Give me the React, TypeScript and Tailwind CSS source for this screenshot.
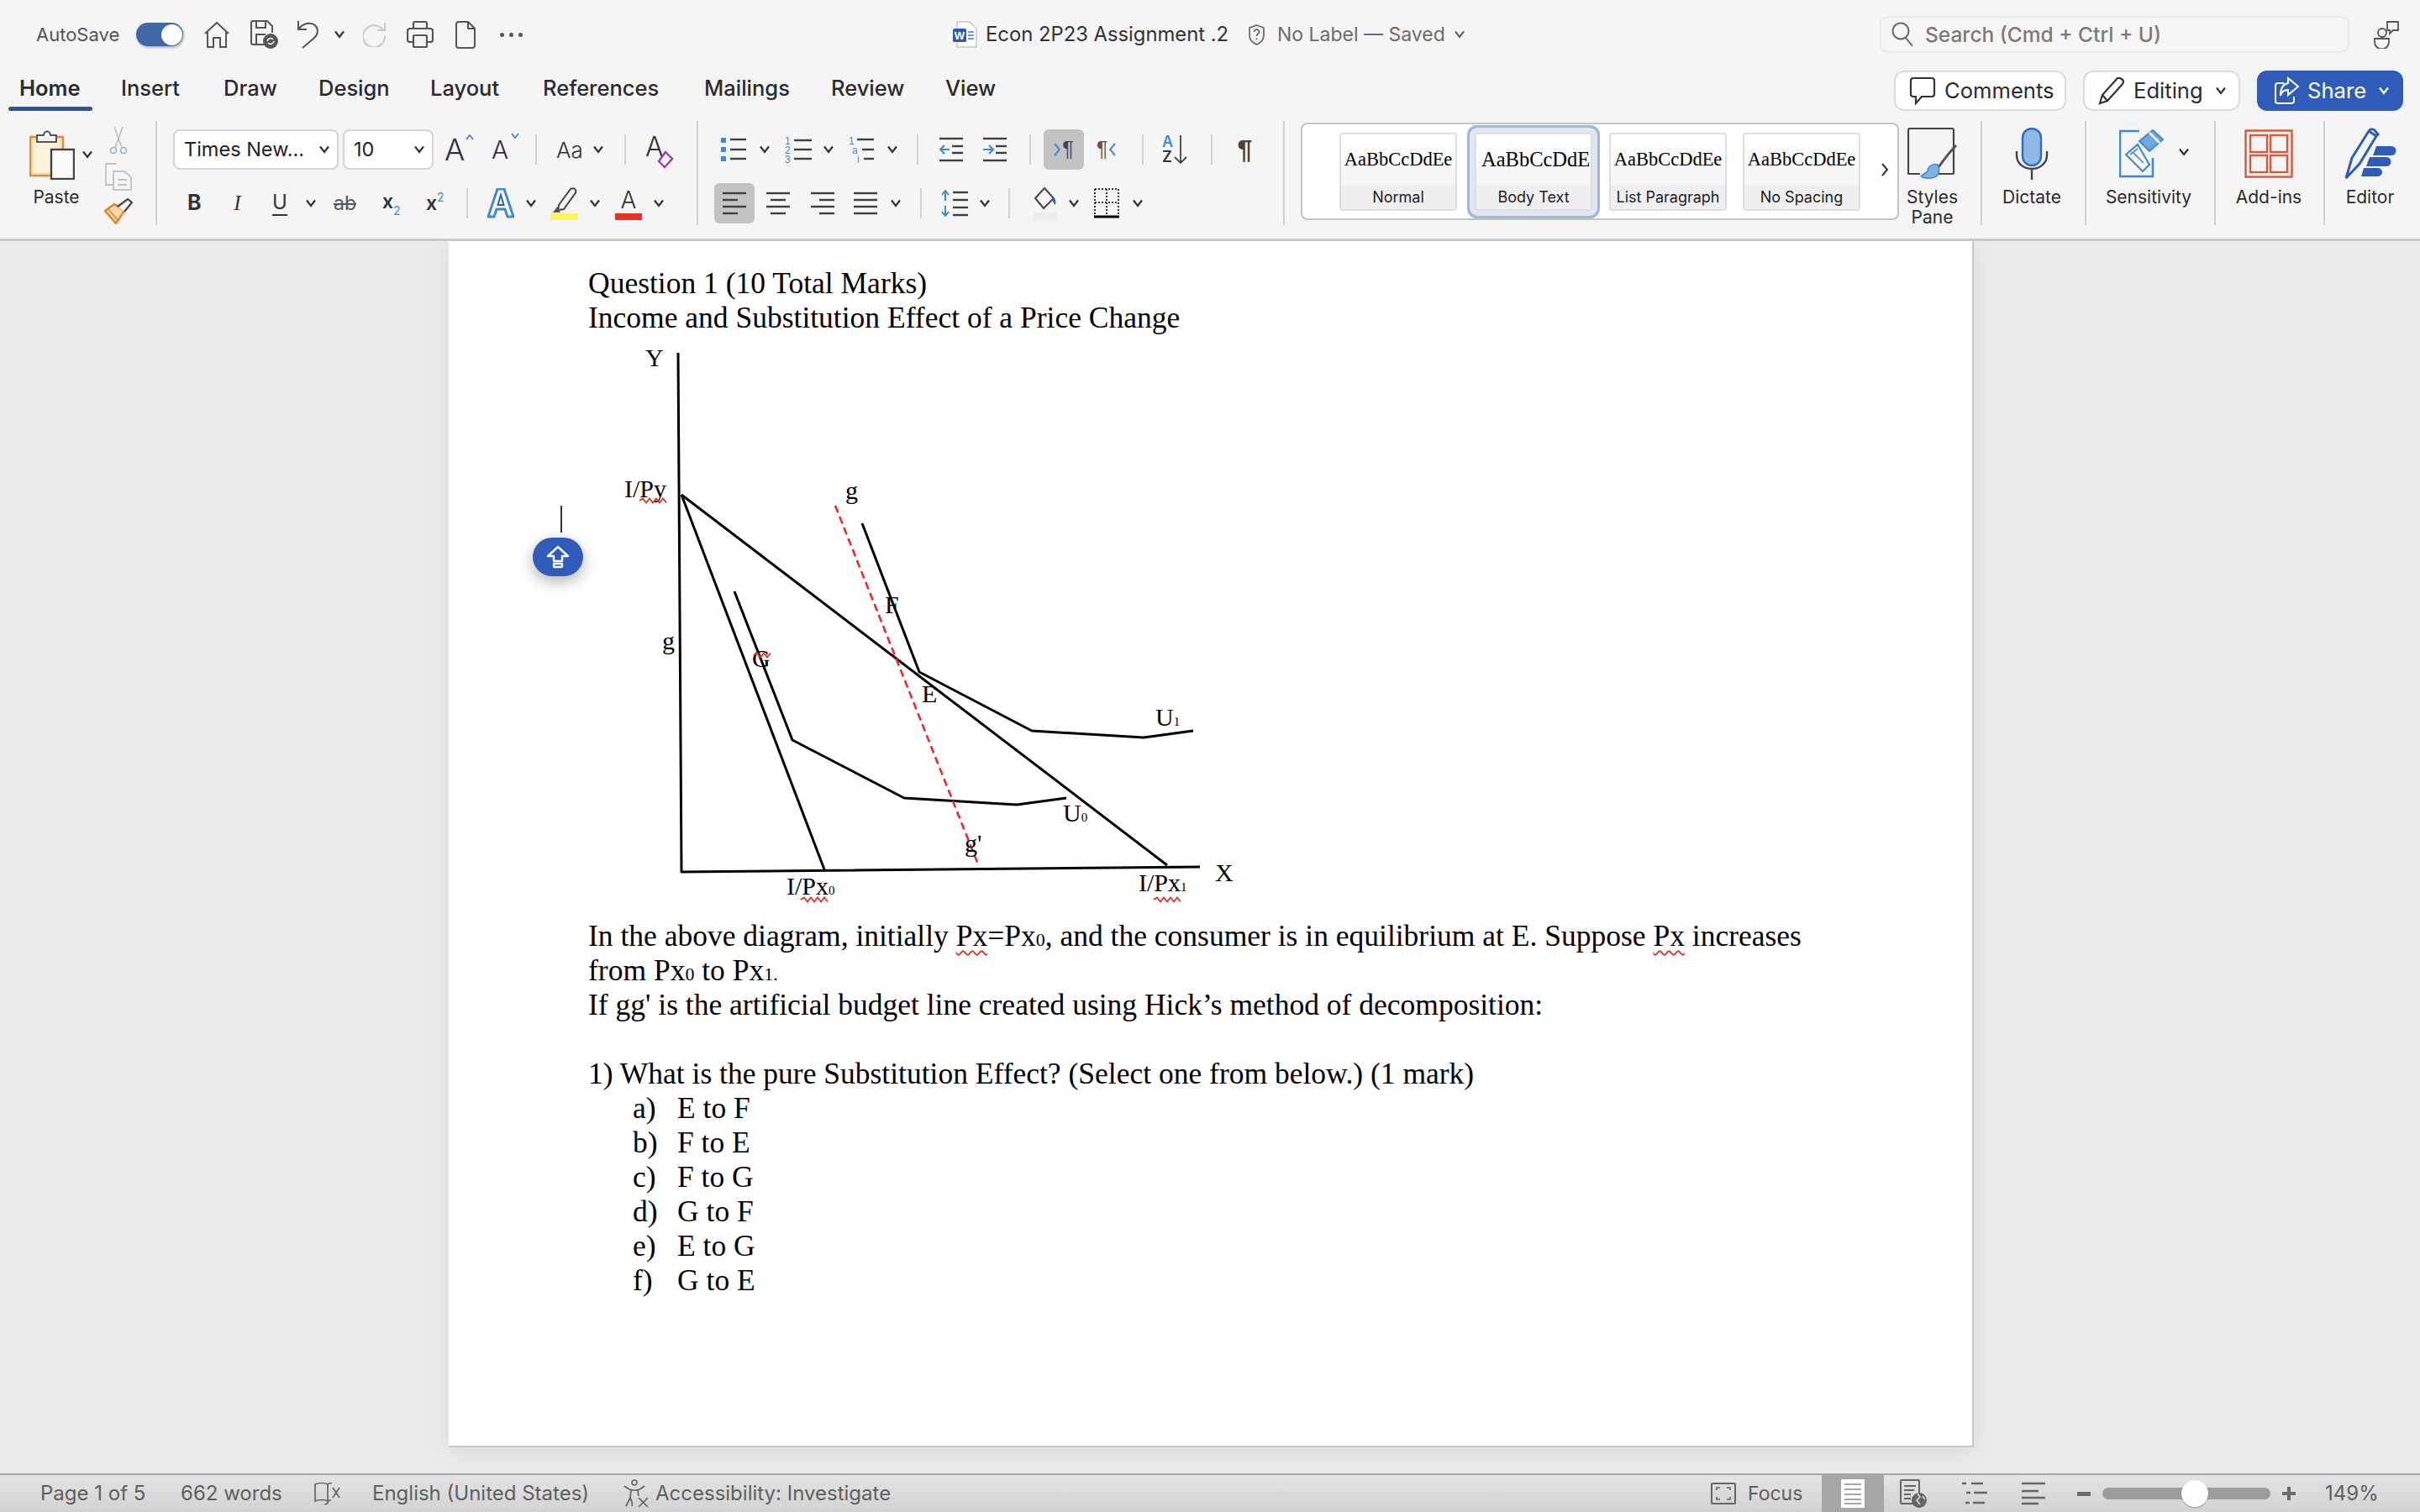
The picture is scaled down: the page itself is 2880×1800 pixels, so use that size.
import type { ReactNode } from 'react'

const INK = '#3f3f3f'
const SKY = '#3f8ad2'

function Chev({ className = '', color = '#333' }: { className?: string; color?: string }) {
  return (
    <svg width="14" height="10" viewBox="0 0 14 10" fill="none" className={`shrink-0 ${className}`}>
      <path d="M2 1.5 7 8 12 1.5" stroke={color} strokeWidth="2.2" />
    </svg>
  )
}

function Sep({ className = '' }: { className?: string }) {
  return <div className={`w-[2px] h-[36px] bg-[#d2d2d2] shrink-0 ${className}`} />
}

function GroupSep() {
  return <div className="w-[2px] h-[124px] mt-[6px] bg-[#cfcfcf] shrink-0" />
}

function Lines({ w, ys, x = 0, color = INK, sw = 2.4 }: { w: number; ys: number[]; x?: number; color?: string; sw?: number }) {
  return (
    <>
      {ys.map((y) => (
        <path key={y} d={`M${x} ${y}H${w}`} stroke={color} strokeWidth={sw} />
      ))}
    </>
  )
}

function AlignIcon({ kind, className = '' }: { kind: 'left' | 'center' | 'right' | 'just'; className?: string }) {
  const rows: Record<string, [number, number][]> = {
    left: [[0, 28], [0, 18], [0, 28], [0, 18]],
    center: [[0, 28], [5, 23], [0, 28], [5, 23]],
    right: [[0, 28], [10, 28], [0, 28], [10, 28]],
    just: [[0, 28], [0, 28], [0, 28], [0, 28]],
  }
  return (
    <svg width="28" height="28" viewBox="0 0 28 28" fill="none" className={`shrink-0 ${className}`}>
      {rows[kind].map(([a, b], i) => (
        <path key={i} d={`M${a} ${2 + i * 8}H${b}`} stroke={INK} strokeWidth="2.4" />
      ))}
    </svg>
  )
}

function Squiggle({ x, y, w }: { x: number; y: number; w: number }) {
  let d = `M${x} ${y}`
  for (let i = 4, up = true; i <= w; i += 4, up = !up) d += `L${x + i} ${y + (up ? -2.5 : 2.5)}`
  return <path d={d} stroke="#d8342a" strokeWidth="1.8" fill="none" />
}

function Spell({ children }: { children: ReactNode }) {
  return <span className="underline decoration-wavy decoration-[#d8342a] decoration-[1.5px] underline-offset-[5px]">{children}</span>
}

function Small({ children }: { children: ReactNode }) {
  return <span className="text-[22px] leading-none">{children}</span>
}

function Tab({ label, active, className = '' }: { label: string; active?: boolean; className?: string }) {
  return (
    <div className={`relative shrink-0 text-[25.5px] leading-[40px] text-[#2b2b2b] whitespace-nowrap ${active ? 'font-semibold' : 'font-[450]'} ${className}`}>
      {label}
      {active && <div className="absolute left-[-13px] w-[100px] top-[42px] h-[5px] rounded-full bg-[#2f5496]" />}
    </div>
  )
}

function StyleCard({ name, selected, big }: { name: string; selected?: boolean; big?: boolean }) {
  return (
    <div className={`w-[140px] h-[93px] shrink-0 rounded-[4px] border-2 border-[#dedede] flex flex-col bg-white ${selected ? 'shadow-[0_0_0_6px_#e0e7f3,0_0_0_9px_#a3b8d9]' : ''}`}>
      <div className={`h-[60px] flex items-center font-['Liberation_Serif',serif] text-black whitespace-nowrap overflow-hidden bg-gradient-to-b from-white to-[#f5f5f5] ${big ? 'text-[24.5px] pl-[6px]' : 'text-[22.5px] justify-center'}`}>
        AaBbCcDdEe
      </div>
      <div className="flex-1 flex items-center justify-center text-[18px] text-[#222] bg-[#efefef] whitespace-nowrap">{name}</div>
    </div>
  )
}

function Tile({ icon, label, width, chev }: { icon: ReactNode; label: ReactNode; width: string; chev?: boolean }) {
  return (
    <div className={`${width} shrink-0 flex flex-col items-center`}>
      <div className="relative h-[62px] mt-[14px] flex items-center justify-center">
        {icon}
        {chev && <Chev className="absolute left-[68px] top-[24px]" />}
      </div>
      <div className="mt-[9px] text-[21px] leading-[24px] text-[#2b2b2b] text-center">{label}</div>
    </div>
  )
}

function Diagram() {
  return (
    <svg viewBox="700 399 800 695" className="block w-[800px] h-[695px] font-['Liberation_Serif',serif] text-[30px]" fill="none">
      <g stroke="#000" strokeWidth="3" strokeLinejoin="round">
        <path d="M807 420 811 1038 1428 1032" />
        <path d="M811 589 981 1035" />
        <path d="M811 589 1389 1030" />
        <path d="M874 704 943 881 1076 950 1210 958 1269 950" />
        <path d="M1026 623 1094 800 1228 870 1361 878 1420 870" />
      </g>
      <path d="M994 602 1164 1029" stroke="#ea2b24" strokeWidth="2.6" strokeDasharray="9 5" />
      <g fill="#000">
        <text x="768" y="436">Y</text>
        <text x="1446" y="1049">X</text>
        <text x="743" y="592">I/Py</text>
        <text x="1006" y="594">g</text>
        <text x="788" y="773">g</text>
        <text x="1053" y="730">F</text>
        <text x="895" y="794">G</text>
        <text x="1097" y="836">E</text>
        <text x="1375" y="864">U<tspan className="text-[15px]">1</tspan></text>
        <text x="1265" y="978">U<tspan className="text-[15px]">0</tspan></text>
        <text x="1148" y="1014">g'</text>
        <text x="936" y="1065">I/Px<tspan className="text-[15px]">0</tspan></text>
        <text x="1355" y="1061">I/Px<tspan className="text-[15px]">1</tspan></text>
      </g>
      <Squiggle x={761} y={596} w={32} />
      <Squiggle x={897} y={780} w={20} />
      <Squiggle x={953} y={1071} w={32} />
      <Squiggle x={1373} y={1071} w={32} />
    </svg>
  )
}

function TitleRow() {
  return (
    <div className="h-[82px] flex items-center">
      <div className="ml-[43px] w-[100px] text-[22px] text-[#555] whitespace-nowrap">AutoSave</div>
      <div className="ml-[19px] w-[56px] h-[28px] rounded-full bg-[#3f66a6] flex justify-end items-center pr-[1px] shadow-[1px_2px_3px_rgba(0,0,0,0.25)]">
        <div className="w-[25px] h-[25px] rounded-full bg-white" />
      </div>
      <svg width="30" height="31" viewBox="0 0 30 31" fill="none" className="ml-[25px] shrink-0" stroke="#555" strokeWidth="2">
        <path d="M1 14 15 1 29 14M4 12V30H11V19H19V30H26V12" />
      </svg>
      <svg width="34" height="34" viewBox="0 0 34 34" fill="none" className="ml-[25px] shrink-0" stroke="#555" strokeWidth="2">
        <path d="M17 29H3a2 2 0 0 1-2-2V3a2 2 0 0 1 2-2h17l6 6v8" />
        <path d="M7 1v8h11V1M7 29V17h11" />
        <circle cx="24" cy="25" r="9" fill="#555" stroke="none" />
        <path d="M20 25a4 4 0 0 1 7-2M28 25a4 4 0 0 1-7 2" stroke="#fff" strokeWidth="1.5" />
      </svg>
      <svg width="27" height="34" viewBox="0 0 27 34" fill="none" className="ml-[21px] shrink-0" stroke="#555" strokeWidth="2">
        <path d="M2 1V11H12M2 11C8 3 17 2 22 6 27 12 25 18 20 22L7 33" />
      </svg>
      <Chev className="ml-[17px]" />
      <svg width="28" height="30" viewBox="0 0 28 30" fill="none" className="ml-[21px] shrink-0" stroke="#c9c9c9" strokeWidth="2">
        <path d="M23 9A13 13 0 1 0 26 17M26 1V10H17" />
      </svg>
      <svg width="32" height="32" viewBox="0 0 32 32" fill="none" className="ml-[24px] shrink-0" stroke="#555" strokeWidth="2.2">
        <path d="M8 10V3a2 2 0 0 1 2-2h12a2 2 0 0 1 2 2v7M8 25H4a3 3 0 0 1-3-3V12a3 3 0 0 1 3-3h24a3 3 0 0 1 3 3v10a3 3 0 0 1-3 3h-4" />
        <rect x="8" y="17" width="16" height="14" rx="1" />
      </svg>
      <svg width="24" height="33" viewBox="0 0 24 33" fill="none" className="ml-[26px] shrink-0" stroke="#555" strokeWidth="2">
        <path d="M15 1H4a3 3 0 0 0-3 3v25a3 3 0 0 0 3 3h16a3 3 0 0 0 3-3V9zM15 1v8h8" />
      </svg>
      <div className="ml-[29px] w-[27px] flex justify-between">
        <span className="w-[5px] h-[5px] rounded-full bg-[#555]" />
        <span className="w-[5px] h-[5px] rounded-full bg-[#555]" />
        <span className="w-[5px] h-[5px] rounded-full bg-[#555]" />
      </div>
      <svg width="30" height="32" viewBox="0 0 30 32" fill="none" className="ml-[512px] shrink-0">
        <path d="M5 1H20L28 9V31H5Z" fill="#fff" stroke="#c8c8c8" strokeWidth="1.5" />
        <rect x="0" y="9" width="16" height="16" rx="1.5" fill="#2b5bb5" />
        <text x="8" y="22" textAnchor="middle" className="text-[13px] font-['Liberation_Sans',sans-serif] font-bold" fill="#fff">W</text>
        <path d="M18 13H25M18 17H25M18 21H25" stroke="#3f7cc8" strokeWidth="1.4" />
      </svg>
      <div className="ml-[9px] w-[289px] text-[23.8px] text-[#333] whitespace-nowrap">Econ 2P23 Assignment .2</div>
      <svg width="19" height="25" viewBox="0 0 19 25" fill="none" className="ml-[24px] shrink-0" stroke="#666" strokeWidth="1.7">
        <path d="M9.5 1 18 4V13C18 18 14 22 9.5 24 5 22 1 18 1 13V4Z" />
        <path d="M6.5 9a3 3 0 1 1 4.5 2.6c-1 .6-1.5 1-1.5 2.4M9.5 16.5v2" />
      </svg>
      <div className="ml-[15px] w-[201px] text-[23px] text-[#6b6b6b] whitespace-nowrap">No Label — Saved</div>
      <Chev className="ml-[9px]" color="#666" />
      <div className="ml-auto w-[559px] h-[44px] rounded-[10px] border-2 border-[#ebebeb] bg-[#f6f6f6] flex items-center pl-[12px]">
        <svg width="27" height="30" viewBox="0 0 27 30" fill="none" stroke="#666" strokeWidth="2" className="shrink-0">
          <circle cx="11" cy="11" r="9.5" />
          <path d="M17 19 25 29" />
        </svg>
        <div className="ml-[13px] text-[24.5px] font-medium text-[#7a7a7a] whitespace-nowrap">Search (Cmd + Ctrl + U)</div>
      </div>
      <svg width="32" height="34" viewBox="0 0 32 34" fill="none" className="ml-[28px] mr-[24px] shrink-0" stroke="#555" strokeWidth="1.8">
        <circle cx="11" cy="15" r="5" />
        <path d="M2 22H19V26A8 8 0 0 1 2 26Z" />
        <path d="M17 2H30V12H24L20 16V12H17Z" />
      </svg>
    </div>
  )
}

function TabRow() {
  return (
    <div className="h-[56px] flex items-start">
      <div className="flex pl-[23px] pt-[3px]">
        <Tab label="Home" active className="w-[121px]" />
        <Tab label="Insert" className="w-[122px]" />
        <Tab label="Draw" className="w-[113px]" />
        <Tab label="Design" className="w-[133px]" />
        <Tab label="Layout" className="w-[134px]" />
        <Tab label="References" className="w-[192px]" />
        <Tab label="Mailings" className="w-[151px]" />
        <Tab label="Review" className="w-[136px]" />
        <Tab label="View" className="w-[60px]" />
      </div>
      <div className="ml-auto mr-[20px] mt-[2px] flex">
        <div className="w-[205px] h-[48px] rounded-[12px] border-2 border-[#dcdcdc] bg-white flex items-center pl-[16px] text-[25.6px] text-[#2b2b2b]">
          <svg width="32" height="34" viewBox="0 0 32 34" fill="none" stroke="#333" strokeWidth="2.2" className="shrink-0">
            <path d="M5 2H27a3 3 0 0 1 3 3V21a3 3 0 0 1-3 3H15L8 32V24H5a3 3 0 0 1-3-3V5a3 3 0 0 1 3-3Z" />
          </svg>
          <span className="ml-[10px]">Comments</span>
        </div>
        <div className="ml-[20px] w-[187px] h-[48px] rounded-[12px] border-2 border-[#dcdcdc] bg-white flex items-center pl-[16px] text-[25.6px] text-[#2b2b2b]">
          <svg width="32" height="34" viewBox="0 0 32 34" fill="none" stroke="#333" strokeWidth="2.2" className="shrink-0">
            <path d="M2 32 5 22 23 2Q27 1 30 5 30 8 29 9L11 29ZM5 22 11 29" />
          </svg>
          <span className="ml-[10px]">Editing</span>
          <Chev className="ml-[14px]" />
        </div>
        <div className="ml-[20px] w-[174px] h-[48px] rounded-[12px] bg-[#2f5cb8] flex items-center pl-[20px] text-[25.6px] text-white">
          <svg width="30" height="34" viewBox="0 0 30 34" fill="none" stroke="#fff" strokeWidth="2" className="shrink-0">
            <path d="M12 8H5a3 3 0 0 0-3 3V29a3 3 0 0 0 3 3H21a3 3 0 0 0 3-3V24" />
            <path d="M17 2 29 12 17 22V16C12 16 9 19 8 23 8 15 11 9 17 8Z" />
          </svg>
          <span className="ml-[10px]">Share</span>
          <Chev className="ml-[14px]" color="#fff" />
        </div>
      </div>
    </div>
  )
}

function PasteGroup() {
  return (
    <div className="relative w-[185px] shrink-0">
      <div className="flex">
        <div className="ml-[35px] mt-[16px] w-[70px] flex flex-col">
          <svg width="54" height="60" viewBox="0 0 54 60" fill="none" className="shrink-0">
            <path d="M1 9H40V55H1Z" fill="#fbe3b0" stroke="#e08a3c" strokeWidth="2.4" />
            <path d="M5 13H36V51H5Z" fill="#fdf3dc" />
            <path d="M9 15V7H17C17 1 25 1 25 7H32V15Z" fill="#f5f5f5" stroke="#555" strokeWidth="2" />
            <rect x="26" y="24" width="27" height="35" fill="#fafafa" stroke="#444" strokeWidth="2.4" />
          </svg>
        </div>
        <Chev className="mt-[41px] -ml-[8px]" />
        <div className="ml-[13px] mt-[12px] flex flex-col items-center gap-[10px]">
          <svg width="22" height="34" viewBox="0 0 22 34" fill="none" stroke="#bdbdbd" strokeWidth="1.6">
            <path d="M6 1 15 26M16 1 7 26" />
            <circle cx="5" cy="29" r="3.5" stroke="#8db4dd" />
            <circle cx="17" cy="29" r="3.5" stroke="#8db4dd" />
          </svg>
          <svg width="32" height="33" viewBox="0 0 32 33" fill="none" stroke="#c4c4c4" strokeWidth="1.8">
            <path d="M14 1H1V26H10" />
            <path d="M10 10H23L31 17V32H10Z" />
            <path d="M15 20H26M15 26H26" />
          </svg>
          <svg width="34" height="31" viewBox="0 0 34 31" fill="none" className="-mt-[1px]">
            <path d="M1 15 14 30 24 15 12 7Z" fill="#fbd9a9" stroke="#e2812c" strokeWidth="2.4" />
            <path d="M5 13 17 27" stroke="#e2812c" strokeWidth="1.5" />
            <path d="M16 10 28 1 33 5 24 16" fill="#f5f5f5" stroke="#444" strokeWidth="2.2" />
          </svg>
        </div>
      </div>
      <div className="absolute top-[85px] left-[38px] w-[58px] text-center text-[21px] leading-[24px] text-[#2b2b2b]">Paste</div>
    </div>
  )
}

function FontGroup() {
  return (
    <div className="w-[642px] shrink-0 pt-[16px] flex flex-col gap-[16px]">
      <div className="h-[48px] flex items-center">
        <div className="ml-[19px] w-[197px] h-[48px] rounded-[8px] border-2 border-[#d4d4d4] bg-white flex items-center justify-between pl-[11px] pr-[8px] text-[23.5px] text-[#222] whitespace-nowrap">
          Times New...
          <Chev />
        </div>
        <div className="ml-[5px] w-[108px] h-[48px] rounded-[8px] border-2 border-[#d4d4d4] bg-white flex items-center justify-between pl-[11px] pr-[8px] text-[23.5px] text-[#222]">
          10
          <Chev />
        </div>
        <div className="ml-[13px] w-[31px] relative text-[36px] leading-[40px] font-light text-[#333]">
          A
          <svg width="10" height="7" viewBox="0 0 10 7" fill="none" className="absolute right-[-4px] top-[2px]"><path d="M1 6 5 1 9 6" stroke={SKY} strokeWidth="1.8" /></svg>
        </div>
        <div className="ml-[25px] w-[27px] relative text-[30px] leading-[40px] font-light text-[#333]">
          A
          <svg width="10" height="7" viewBox="0 0 10 7" fill="none" className="absolute right-[-6px] top-[0px]"><path d="M1 1 5 6 9 1" stroke={SKY} strokeWidth="1.8" /></svg>
        </div>
        <Sep className="ml-[25px]" />
        <div className="ml-[23px] w-[33px] text-[26px] font-light text-[#333] whitespace-nowrap">Aa</div>
        <Chev className="ml-[10px]" />
        <Sep className="ml-[24px]" />
        <div className="ml-[23px] w-[32px] relative h-[34px]">
          <span className="absolute left-0 top-[-4px] text-[32px] leading-[36px] font-light text-[#333]">A</span>
          <svg width="20" height="22" viewBox="0 0 20 22" fill="none" className="absolute right-[-2px] bottom-[-6px]"><path d="M10 2 18 10 9 20 2 13Z" fill="#f5f5f5" stroke="#9a3fb0" strokeWidth="2.4" /></svg>
        </div>
      </div>
      <div className="h-[48px] flex items-center">
        <div className="ml-[36px] w-[15px] text-[25px] font-bold text-[#333] text-center">B</div>
        <div className="ml-[39px] w-[11px] text-[25px] italic font-['Liberation_Serif',serif] text-[#333] text-center">I</div>
        <div className="ml-[36px] w-[18px] text-[24px] leading-[28px] text-[#333] text-center border-b-2 border-[#333]">U</div>
        <Chev className="ml-[21px]" />
        <div className="ml-[18px] w-[31px] text-[23px] text-[#555] text-center line-through">ab</div>
        <div className="ml-[29px] w-[22px] text-[23px] font-semibold text-[#333] whitespace-nowrap">x<span className="text-[14px] font-normal text-[#3f8ad2] align-[-8px]">2</span></div>
        <div className="ml-[30px] w-[23px] text-[23px] font-semibold text-[#333] whitespace-nowrap">x<span className="text-[14px] font-normal text-[#3f8ad2] align-[10px]">2</span></div>
        <Sep className="ml-[25px]" />
        <svg width="32" height="36" viewBox="0 0 32 36" fill="none" className="ml-[23px] shrink-0">
          <path d="M1 34 12 1H20L31 34H24L21 25H11L8 34Z" fill="#fff" stroke="#3f8ad2" strokeWidth="3" />
          <path d="M12.5 20H19.5L16 8Z" fill="#fff" stroke="#2f5cb8" strokeWidth="2" />
        </svg>
        <Chev className="ml-[13px]" />
        <svg width="33" height="40" viewBox="0 0 33 40" fill="none" className="ml-[16px] shrink-0">
          <path d="M10 22 24 3Q28 1 30 4 31 7 29 9L16 27 9 28Z" stroke="#444" strokeWidth="2" fill="#f5f5f5" />
          <path d="M8 24 3 31H12Z" fill="#555" />
          <rect x="0" y="32" width="33" height="8" fill="#fdf65a" />
        </svg>
        <Chev className="ml-[13px]" />
        <div className="ml-[17px] w-[32px] flex flex-col items-center">
          <div className="text-[28px] leading-[31px] font-light text-[#333]">A</div>
          <div className="w-[32px] h-[8px] bg-[#e8322a]" />
        </div>
        <Chev className="ml-[13px]" />
      </div>
    </div>
  )
}

function ParagraphGroup() {
  return (
    <div className="w-[696px] shrink-0 pt-[16px] flex flex-col gap-[16px]">
      <div className="h-[48px] flex items-center">
        <svg width="30" height="30" viewBox="0 0 30 30" fill="none" className="ml-[27px] shrink-0">
          <rect x="0" y="1" width="6" height="6" fill={SKY} />
          <rect x="0" y="12" width="6" height="6" fill={SKY} />
          <rect x="0" y="23" width="6" height="6" fill={SKY} />
          <Lines x={11} w={30} ys={[3, 15, 26]} />
        </svg>
        <Chev className="ml-[15px]" />
        <svg width="32" height="32" viewBox="0 0 32 32" fill="none" className="ml-[17px] shrink-0 font-['Liberation_Sans',sans-serif] text-[12px]">
          <text x="0" y="10" fill={SKY}>1</text>
          <text x="0" y="21" fill={SKY}>2</text>
          <text x="0" y="32" fill={SKY}>3</text>
          <Lines x={11} w={32} ys={[5, 16, 27]} />
        </svg>
        <Chev className="ml-[13px]" />
        <svg width="30" height="32" viewBox="0 0 30 32" fill="none" className="ml-[17px] shrink-0 font-['Liberation_Sans',sans-serif] text-[12px]">
          <text x="0" y="10" fill={SKY}>1</text>
          <text x="4" y="21" fill={SKY}>a</text>
          <text x="10" y="32" fill={SKY}>i</text>
          <Lines x={10} w={30} ys={[4]} />
          <Lines x={16} w={30} ys={[16]} />
          <Lines x={18} w={30} ys={[27]} />
        </svg>
        <Chev className="ml-[15px]" />
        <Sep className="ml-[22px]" />
        <svg width="28" height="30" viewBox="0 0 28 30" fill="none" className="ml-[25px] shrink-0">
          <Lines w={28} ys={[2, 28]} />
          <Lines x={15} w={28} ys={[11, 19]} />
          <path d="M12 15H2M6 10 1 15 6 20" stroke={SKY} strokeWidth="2.2" />
        </svg>
        <svg width="28" height="30" viewBox="0 0 28 30" fill="none" className="ml-[24px] shrink-0">
          <Lines w={28} ys={[2, 28]} />
          <Lines x={15} w={28} ys={[11, 19]} />
          <path d="M0 15H11M7 10 12 15 7 20" stroke={SKY} strokeWidth="2.2" />
        </svg>
        <Sep className="ml-[27px]" />
        <div className="ml-[15px] w-[48px] h-[48px] rounded-[6px] bg-[#c3c3c3] flex items-center justify-center gap-[2px]">
          <svg width="8" height="16" viewBox="0 0 8 16" fill="none"><path d="M1 1 7 8 1 15" stroke={SKY} strokeWidth="2" /></svg>
          <span className="text-[25px] text-[#444] font-['Liberation_Sans',sans-serif]">¶</span>
        </div>
        <div className="ml-[15px] w-[25px] flex items-center gap-[2px]">
          <span className="text-[25px] text-[#555] font-['Liberation_Sans',sans-serif]">¶</span>
          <svg width="8" height="16" viewBox="0 0 8 16" fill="none" className="shrink-0"><path d="M7 1 1 8 7 15" stroke={SKY} strokeWidth="2" /></svg>
        </div>
        <Sep className="ml-[29px]" />
        <div className="ml-[22px] w-[33px] h-[36px] flex">
          <div className="flex flex-col text-[18px] leading-[18px] font-semibold">
            <span className="text-[#3f8ad2]">A</span>
            <span className="text-[#333]">Z</span>
          </div>
          <svg width="16" height="36" viewBox="0 0 16 36" fill="none" stroke="#444" strokeWidth="1.8" className="ml-[1px]"><path d="M8 1V34M1 27 8 34 15 27" /></svg>
        </div>
        <Sep className="ml-[25px]" />
        <div className="ml-[28px] w-[21px] text-[32px] leading-[36px] font-bold text-[#444] text-center font-['Liberation_Sans',sans-serif]">¶</div>
      </div>
      <div className="h-[48px] flex items-center">
        <div className="ml-[19px] w-[48px] h-[48px] rounded-[6px] bg-[#c3c3c3] flex items-center justify-center"><AlignIcon kind="left" /></div>
        <AlignIcon kind="center" className="ml-[14px]" />
        <AlignIcon kind="right" className="ml-[25px]" />
        <AlignIcon kind="just" className="ml-[23px]" />
        <Chev className="ml-[15px]" />
        <Sep className="ml-[22px]" />
        <svg width="32" height="32" viewBox="0 0 32 32" fill="none" className="ml-[23px] shrink-0">
          <path d="M5 13V2M1 6 5 1 9 6M5 19V30M1 26 5 31 9 26" stroke={SKY} strokeWidth="2" />
          <Lines x={14} w={32} ys={[3, 12, 21, 30]} />
        </svg>
        <Chev className="ml-[13px]" />
        <Sep className="ml-[21px]" />
        <svg width="28" height="40" viewBox="0 0 28 40" fill="none" className="ml-[28px] shrink-0">
          <path d="M13 2 2 14 12 26 24 14Z" stroke="#444" strokeWidth="2" fill="#f5f5f5" />
          <path d="M24 13C26 15 27 18 26 22 24 20 22 17 22 12Z" fill="#2f5cb8" />
          <rect x="0" y="31" width="28" height="9" fill="#ededed" />
        </svg>
        <Chev className="ml-[13px]" />
        <svg width="30" height="36" viewBox="0 0 30 36" fill="none" className="ml-[17px] shrink-0" stroke="#333" strokeWidth="2" strokeDasharray="2 2">
          <path d="M1 1H29V33M1 1V33M15 1V33M1 17H29" />
          <path d="M0 34H30" strokeDasharray="none" stroke="#000" strokeWidth="3" />
        </svg>
        <Chev className="ml-[15px]" />
      </div>
    </div>
  )
}

function StylesBox() {
  return (
    <div className="ml-[19px] mt-[8px] w-[712px] h-[116px] shrink-0 rounded-[8px] border-2 border-[#c4c4c4] bg-white flex items-start pt-[10px] pl-[44px]">
      <StyleCard name="Normal" />
      <div className="w-[21px] shrink-0" />
      <StyleCard name="Body Text" selected big />
      <div className="w-[20px] shrink-0" />
      <StyleCard name="List Paragraph" />
      <div className="w-[19px] shrink-0" />
      <StyleCard name="No Spacing" />
      <svg width="10" height="16" viewBox="0 0 10 16" fill="none" className="ml-[24px] mt-[36px] shrink-0"><path d="M2 1 8 8 2 15" stroke="#333" strokeWidth="2" /></svg>
    </div>
  )
}

function Ribbon() {
  return (
    <div className="h-[146px] flex">
      <PasteGroup />
      <GroupSep />
      <FontGroup />
      <GroupSep />
      <ParagraphGroup />
      <GroupSep />
      <StylesBox />
      <Tile
        width="w-[79px] mr-[18px]"
        label={<>Styles<br />Pane</>}
        icon={
          <svg width="60" height="62" viewBox="0 0 60 62" fill="none">
            <path d="M37 55H54a1 1 0 0 0 1-1V3a2 2 0 0 0-2-2H3a2 2 0 0 0-2 2V54a1 1 0 0 0 1 1H15" stroke="#444" strokeWidth="2.2" />
            <path d="M58 21C53 26 42 40 37 47" stroke="#555" strokeWidth="3" />
            <path d="M36 44C30 42 24 46 24 52 20 56 16 56 16 58 22 62 44 62 36 44Z" fill="#7fb0e3" stroke={SKY} strokeWidth="1.5" />
          </svg>
        }
      />
      <GroupSep />
      <Tile
        width="w-[118px] mr-[4px]"
        label="Dictate"
        icon={
          <svg width="40" height="62" viewBox="0 0 40 62" fill="none">
            <rect x="9" y="1" width="22" height="44" rx="11" fill="#8fbae6" stroke="#2f6bc0" strokeWidth="2.4" />
            <path d="M2 28V33C2 42 10 49 20 49 30 49 38 42 38 33V28M20 49V62" stroke="#444" strokeWidth="2.4" />
          </svg>
        }
      />
      <GroupSep />
      <Tile
        width="w-[148px] mr-[4px]"
        chev
        label="Sensitivity"
        icon={
          <svg width="68" height="58" viewBox="0 0 68 58" fill="none" className="-ml-[2px]">
            <path d="M24 2H1V56H40V34" stroke={SKY} strokeWidth="2.6" />
            <path d="M8 30 22 18 36 42 28 50Z" stroke={SKY} strokeWidth="2.2" fill="#f5f5f5" />
            <path d="M13 30 22 23M29 40 17 28" stroke={SKY} strokeWidth="1.6" />
            <path d="M24 14 40 1 52 12 36 26Z" fill="#6ea8df" stroke={SKY} strokeWidth="2" />
            <path d="M36 4 48 16" stroke="#f5f5f5" strokeWidth="2.6" />
          </svg>
        }
      />
      <GroupSep />
      <Tile
        width="w-[126px] mr-[2px]"
        label="Add-ins"
        icon={
          <svg width="58" height="58" viewBox="0 0 58 58" fill="none" stroke="#d9583a" strokeWidth="2.4">
            <rect x="1.5" y="1.5" width="55" height="55" />
            <rect x="7" y="7" width="20" height="20" />
            <rect x="31" y="7" width="20" height="20" />
            <rect x="7" y="31" width="20" height="20" />
            <rect x="31" y="31" width="20" height="20" />
          </svg>
        }
      />
      <GroupSep />
      <Tile
        width="w-[107px] mr-[6px]"
        label="Editor"
        icon={
          <svg width="62" height="62" viewBox="0 0 62 62" fill="none">
            <path d="M38 22H56a5 5 0 0 1 0 11H34ZM30 35H50a5 5 0 0 1 0 11H26ZM23 48H40a5 5 0 0 1 0 10H20Z" fill="#2f5cb8" />
            <path d="M2 60 9 36 29 4 38 10 18 43ZM29 4Q32 0 36 3L40 8 38 10" fill="#f5f5f5" stroke="#2f5cb8" strokeWidth="3" />
          </svg>
        }
      />
    </div>
  )
}

function DocumentPage() {
  return (
    <div className="flex-1 min-h-0 bg-[#ebebeb]">
      <div className="relative ml-[534px] w-[1815px] h-[1436px] bg-white border-r-2 border-b-2 border-[#c9c9c9] shadow-[0_6px_24px_rgba(0,0,0,0.08)] pt-[30px] pl-[166px] pr-[166px] font-['Liberation_Serif',serif] text-[35.5px] leading-[41px] text-black">
        <p>Question 1 (10 Total Marks)</p>
        <p>Income and Substitution Effect of a Price Change</p>
        <Diagram />
        <p>
          In the above diagram, initially <Spell>Px</Spell>=Px<Small>0</Small>, and the consumer is in equilibrium at E. Suppose <Spell>Px</Spell> increases
          from Px<Small>0</Small> to Px<Small>1.</Small>
        </p>
        <p>If gg' is the artificial budget line created using Hick’s method of decomposition:</p>
        <p className="mt-[41px]">1) What is the pure Substitution Effect? (Select one from below.) (1 mark)</p>
        <ul>
          {[
            ['a)', 'E to F'],
            ['b)', 'F to E'],
            ['c)', 'F to G'],
            ['d)', 'G to F'],
            ['e)', 'E to G'],
            ['f)', 'G to E'],
          ].map(([mark, text]) => (
            <li key={mark} className="flex pl-[53px]">
              <span className="w-[53px]">{mark}</span>
              <span>{text}</span>
            </li>
          ))}
        </ul>
        <div className="absolute left-[132.5px] top-[315px] w-[2px] h-[32px] bg-[#333]" />
        <div className="absolute left-[100px] top-[353px] w-[60px] h-[46px] rounded-[23px] bg-[#2f5cb8] shadow-[0_6px_18px_rgba(0,0,0,0.3)] flex items-center justify-center">
          <svg width="28" height="28" viewBox="0 0 28 28" fill="none" stroke="#fff" strokeWidth="2.4">
            <path d="M14 2 26 13H19V19H9V13H2Z" strokeLinejoin="round" />
            <rect x="9" y="22" width="10" height="4" rx="1" />
          </svg>
        </div>
      </div>
    </div>
  )
}

function StatusBar() {
  return (
    <div className="h-[46px] shrink-0 border-t-2 border-[#a8a8a8] bg-gradient-to-b from-[#e4e4e4] to-[#d2d2d2] flex items-center text-[24px] text-[#5f5f5f] whitespace-nowrap">
      <div className="ml-[48px] w-[124px]">Page 1 of 5</div>
      <div className="ml-[43px] w-[119px]">662 words</div>
      <svg width="31" height="28" viewBox="0 0 31 28" fill="none" stroke="#666" strokeWidth="1.7" className="ml-[40px] shrink-0">
        <path d="M16 3C13 1 5 1 1 3V23C5 21 13 21 16 23 17 24 17 26 12 27M16 3V24" />
        <path d="M16 3C18 1.5 19 1.5 21 1.5M16 23C18 22 19 22 20 22" />
        <path d="M22 7 30 19M30 7 22 19" />
      </svg>
      <div className="ml-[38px] w-[259px]">English (United States)</div>
      <svg width="30" height="34" viewBox="0 0 30 34" fill="none" stroke="#666" strokeWidth="1.7" className="ml-[40px] shrink-0">
        <circle cx="13" cy="4" r="3" />
        <path d="M1 8C6 12 8 13 13 13 18 13 20 12 25 8M9 13 8 22 3 32M17 13 18 20M8 22C10 26 11 29 10 32" />
        <path d="M18 22 29 33M29 22 18 33" />
      </svg>
      <div className="ml-[8px] w-[276px]">Accessibility: Investigate</div>
      <svg width="30" height="26" viewBox="0 0 30 26" fill="none" stroke="#666" strokeWidth="2" className="ml-[980px] shrink-0">
        <rect x="1" y="1" width="28" height="24" rx="1" />
        <path d="M7 9V6H11M19 6H23V9M23 17V20H19M11 20H7V17" strokeWidth="1.7" />
      </svg>
      <div className="ml-[14px] w-[88px] text-[23px]">Focus</div>
      <div className="w-[74px] h-full bg-[#a6a6a6] flex items-center justify-center shrink-0">
        <svg width="28" height="34" viewBox="0 0 28 34" fill="none">
          <rect width="28" height="34" rx="1" fill="#fff" />
          <path d="M4 6H24M4 12H24M4 18H24M4 24H24M4 29H24" stroke="#a6a6a6" strokeWidth="2" />
        </svg>
      </div>
      <svg width="32" height="34" viewBox="0 0 32 34" fill="none" className="ml-[19px] shrink-0">
        <rect x="1" y="1" width="22" height="28" rx="1" stroke="#666" strokeWidth="2" />
        <path d="M5 8H19M5 13H17M5 18H13M5 23H13" stroke="#666" strokeWidth="2" />
        <circle cx="23" cy="25" r="9" fill="#666" />
        <path d="M21 17 24 21 20 25 24 30M27 20 30 24" stroke="#ddd" strokeWidth="1.5" />
      </svg>
      <svg width="31" height="28" viewBox="0 0 31 28" fill="none" className="ml-[41px] shrink-0">
        <path d="M1 2H6M12 2H26M6 13H11M15 13H31M5 25H10M14 25H28" stroke="#666" strokeWidth="2.4" />
      </svg>
      <svg width="28" height="28" viewBox="0 0 28 28" fill="none" className="ml-[41px] shrink-0">
        <path d="M0 2H28M0 11H20M0 19H28M0 26H20" stroke="#666" strokeWidth="2.6" />
      </svg>
      <div className="ml-[38px] w-[16px] h-[5px] bg-[#6a6a6a] shrink-0" />
      <div className="ml-[14px] w-[200px] h-[14px] rounded-full bg-[#9c9c9c] relative shrink-0">
        <div className="absolute left-[94px] top-[-9px] w-[32px] h-[32px] rounded-full bg-white shadow-[0_1px_2px_rgba(0,0,0,0.3)]" />
      </div>
      <div className="ml-[14px] w-[16px] h-[16px] relative shrink-0">
        <div className="absolute top-[6px] left-0 w-[16px] h-[4px] bg-[#6a6a6a]" />
        <div className="absolute left-[6px] top-0 w-[4px] h-[16px] bg-[#6a6a6a]" />
      </div>
      <div className="ml-[35px]">149%</div>
    </div>
  )
}

export default function App() {
  return (
    <div className="w-[2880px] h-[1800px] flex flex-col overflow-hidden bg-[#ebebeb] font-['Inter',sans-serif]">
      <div className="h-[287px] shrink-0 bg-[#f5f5f5] border-b-[3px] border-[#cacaca] relative z-10">
        <TitleRow />
        <TabRow />
        <Ribbon />
      </div>
      <DocumentPage />
      <StatusBar />
    </div>
  )
}
